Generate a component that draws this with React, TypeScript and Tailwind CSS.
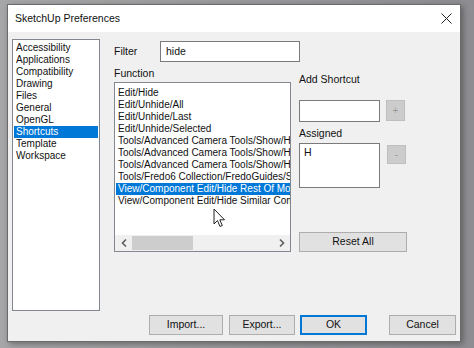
import React from "react";

const font = { fontFamily: '"Liberation Sans", Arial, sans-serif' };

const pages = ["Accessibility", "Applications", "Compatibility", "Drawing", "Files", "General", "OpenGL", "Shortcuts", "Template", "Workspace"];

const functions = [
  "Edit/Hide",
  "Edit/Unhide/All",
  "Edit/Unhide/Last",
  "Edit/Unhide/Selected",
  "Tools/Advanced Camera Tools/Show/Hide Cameras",
  "Tools/Advanced Camera Tools/Show/Hide Frustum Lines",
  "Tools/Advanced Camera Tools/Show/Hide Frustum Volume",
  "Tools/Fredo6 Collection/FredoGuides/Show Hide",
  "View/Component Edit/Hide Rest Of Model",
  "View/Component Edit/Hide Similar Components",
];

function Btn({ children, primary, className = "" }: { children: React.ReactNode; primary?: boolean; className?: string }) {
  return (
    <button
      className={`flex h-[20px] items-center justify-center bg-[#e1e1e1] text-[10.5px] text-[#111] ${primary ? "border-2 border-[#0078d7]" : "border border-[#adadad]"} ${className}`}
    >
      {children}
    </button>
  );
}

export default function App() {
  return (
    <div className="relative h-[348px] w-[474px] overflow-hidden bg-gradient-to-r from-[#a6a6a8] to-[#8e8e92] pl-[7px] pt-[4px]" style={font}>
      <div className="flex h-[338px] w-[454px] flex-col border border-[#6b6b6b] bg-[#f0f0f0] shadow-[2px_2px_6px_rgba(0,0,0,0.35)]">
        {/* title bar */}
        <div className="flex h-[27px] flex-none items-center justify-between bg-white pl-[7px] pr-[8px]">
          <span className="text-[10.5px] text-[#111]">SketchUp Preferences</span>
          <svg width="11" height="11" viewBox="0 0 11 11" className="mb-[1px]">
            <path d="M0.5 0.5 L10.5 10.5 M10.5 0.5 L0.5 10.5" stroke="#222" strokeWidth="1" />
          </svg>
        </div>

        <div className="flex flex-1 flex-col px-[4px] pt-[7px]">
          <div className="flex flex-1">
            {/* page list */}
            <div className="h-[272px] w-[88px] flex-none border border-[#828790] bg-white pt-[2px] pl-[1px] pr-[1px]">
              {pages.map((p) => (
                <div
                  key={p}
                  className={`h-[12px] pl-[2px] text-[10px] leading-[12px] ${p === "Shortcuts" ? "bg-[#0078d7] text-white" : "text-[#111]"}`}
                >
                  {p}
                </div>
              ))}
            </div>

            {/* shortcuts panel */}
            <div className="ml-[14px] flex flex-col pt-[2px]">
              <div className="flex items-center">
                <span className="w-[46px] text-[10.5px] text-[#111]">Filter</span>
                <div className="flex h-[21px] w-[140px] items-center border border-[#7a7a7a] bg-white px-[5px] text-[10.5px] text-[#111]">hide</div>
              </div>

              <div className="flex">
                <div className="flex flex-col">
                  <span className="mt-[3px] h-[17px] text-[10.5px] leading-[17px] text-[#111]">Function</span>
                  <div className="flex h-[170px] w-[177px] flex-col border border-[#828790] bg-white">
                    <div className="flex-1 overflow-hidden pl-[1px] pt-[4px]">
                      {functions.map((f, i) => (
                        <div
                          key={f}
                          className={`h-[12px] whitespace-nowrap pl-[2px] text-[10px] leading-[12px] ${i === 8 ? "bg-[#0078d7] text-white" : "text-[#111]"}`}
                        >
                          {f}
                        </div>
                      ))}
                    </div>
                    <div className="flex h-[16px] flex-none items-center bg-[#f0f0f0]">
                      <div className="flex w-[17px] justify-center">
                        <svg width="6" height="8" viewBox="0 0 6 8">
                          <path d="M5 0.5 L1.5 4 L5 7.5" stroke="#606060" strokeWidth="1.6" fill="none" />
                        </svg>
                      </div>
                      <div className="h-[14px] w-[61px] bg-[#cdcdcd]" />
                      <div className="flex-1" />
                      <div className="flex w-[17px] justify-center">
                        <svg width="6" height="8" viewBox="0 0 6 8">
                          <path d="M1 0.5 L4.5 4 L1 7.5" stroke="#606060" strokeWidth="1.6" fill="none" />
                        </svg>
                      </div>
                    </div>
                  </div>
                </div>

                <div className="ml-[8px] flex flex-col">
                  <span className="mt-[10px] h-[14px] text-[10.5px] leading-[14px] text-[#111]">Add Shortcut</span>
                  <div className="mt-[14px] flex items-start">
                    <div className="h-[22px] w-[81px] border border-[#7a7a7a] bg-white" />
                    <div className="ml-[6px] flex h-[21px] w-[19px] items-center justify-center border border-[#bfbfbf] bg-[#cccccc] text-[10px] text-[#9a9a9a]">+</div>
                  </div>
                  <span className="mt-[4px] h-[14px] text-[10.5px] leading-[14px] text-[#111]">Assigned</span>
                  <div className="mt-[3px] flex items-start">
                    <div className="h-[45px] w-[81px] border border-[#7a7a7a] bg-white pl-[4px] pt-[2px] text-[10.5px] leading-[12px] text-[#111]">H</div>
                    <div className="ml-[7px] mt-[2px] flex h-[19px] w-[19px] items-center justify-center border border-[#bfbfbf] bg-[#cccccc] text-[10px] text-[#9a9a9a]">-</div>
                  </div>
                  <Btn className="mt-[44px] w-[108px] pb-[1px]">Reset All</Btn>
                </div>
              </div>
            </div>
          </div>

          {/* bottom buttons */}
          <div className="mb-[6px] flex items-center pl-[137px]">
            <Btn className="w-[74px]">Import...</Btn>
            <Btn className="ml-[6px] w-[66px]">Export...</Btn>
            <Btn primary className="ml-[5px] w-[67px]">OK</Btn>
            <Btn className="ml-[22px] w-[67px]">Cancel</Btn>
          </div>
        </div>
      </div>

      {/* mouse pointer */}
      <svg className="absolute left-[213px] top-[208px]" width="13" height="20" viewBox="0 0 13 20">
        <path d="M1 1 L1 16 L4.5 12.5 L7 18.5 L9.3 17.5 L6.8 11.8 L11.5 11.8 Z" fill="white" stroke="#222" strokeWidth="1" strokeLinejoin="round" />
      </svg>
    </div>
  );
}
